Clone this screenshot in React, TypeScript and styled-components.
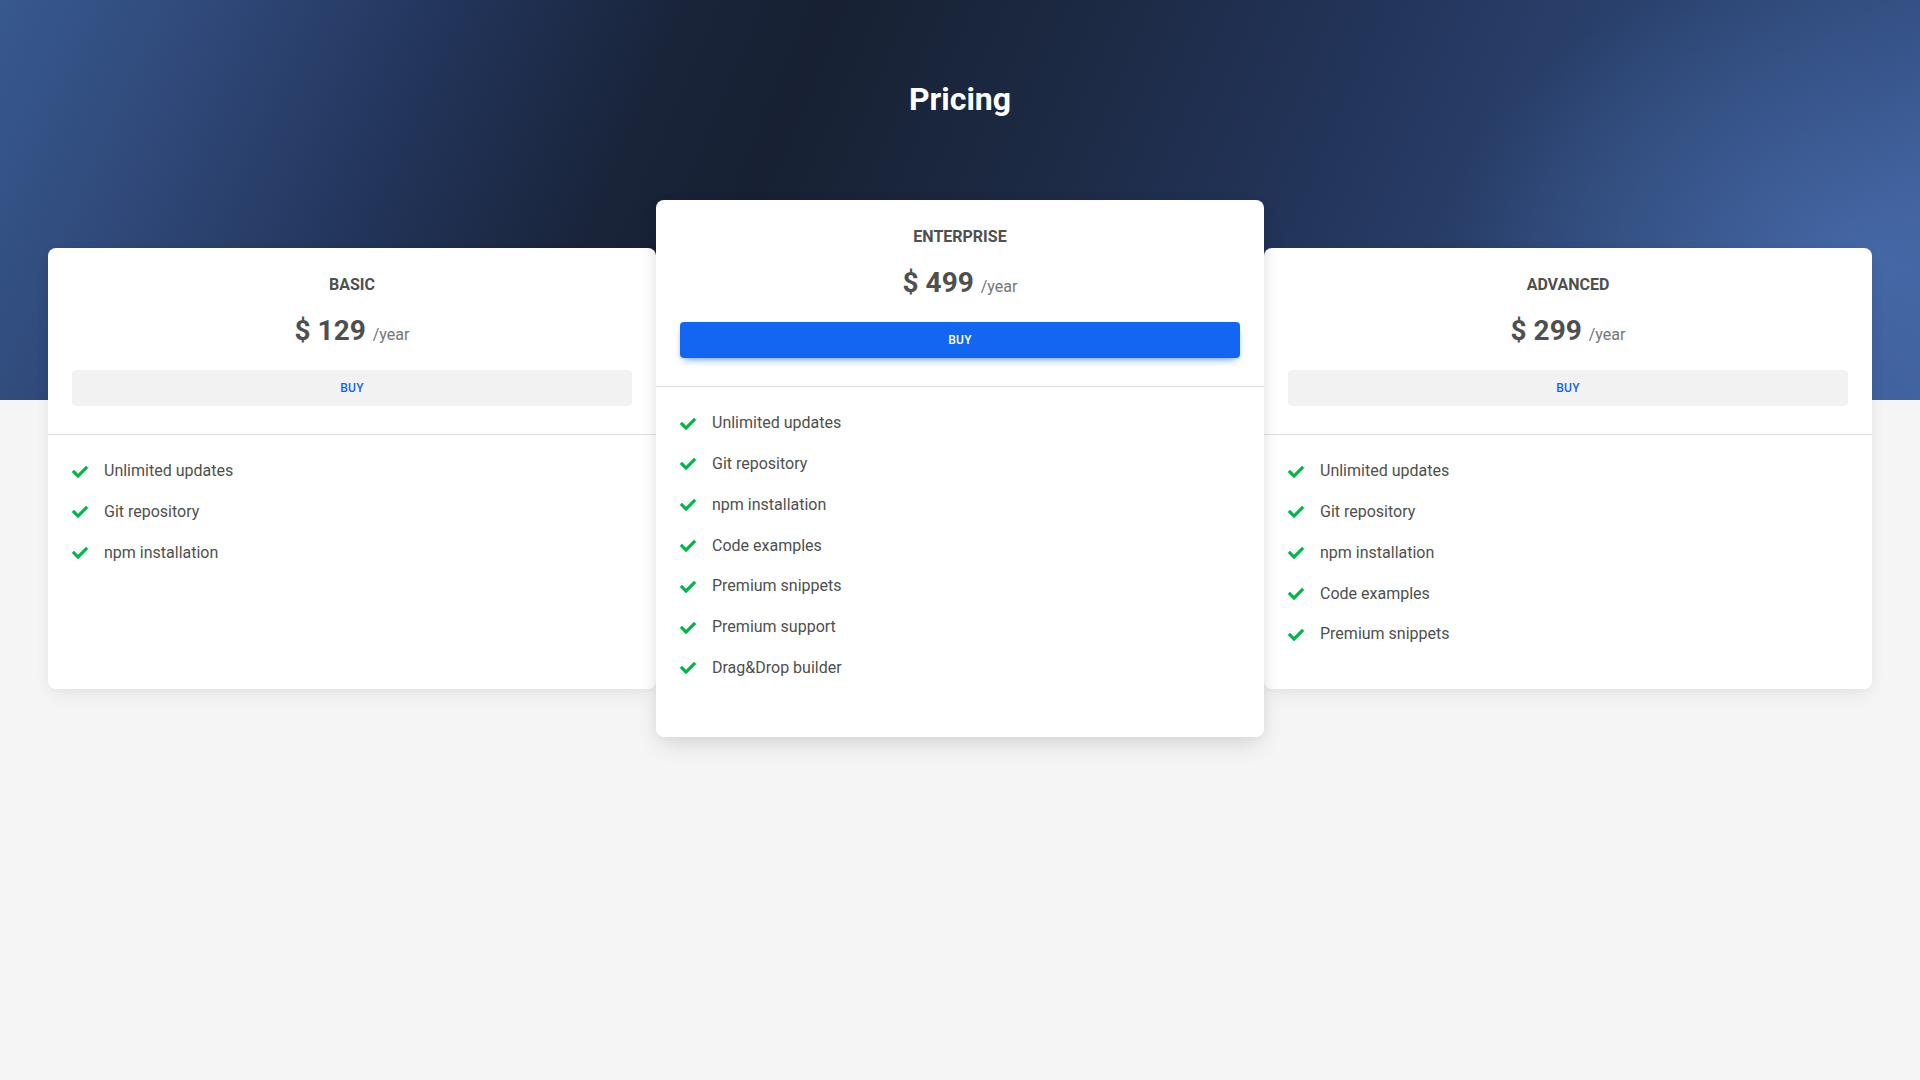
import * as React from 'react';
import { FaCheck } from 'react-icons/fa';
import { default as styled, createGlobalStyle } from 'styled-components';

interface Plan {
  name: string;
  price: number;
  features: string[];
  featured?: boolean;
}

const ALL_FEATURES = [
  'Unlimited updates',
  'Git repository',
  'npm installation',
  'Code examples',
  'Premium snippets',
  'Premium support',
  'Drag&Drop builder',
];

const plans: Plan[] = [
  { name: 'Basic', price: 129, features: ALL_FEATURES.slice(0, 3) },
  { name: 'Enterprise', price: 499, features: ALL_FEATURES, featured: true },
  { name: 'Advanced', price: 299, features: ALL_FEATURES.slice(0, 5) },
];

const GlobalStyle = createGlobalStyle`
  html, body {
    margin: 0;
    padding: 0;
  }
  body {
    background: #f5f5f5;
    font-family: Roboto, "Liberation Sans", Arial, sans-serif;
    color: #4f4f4f;
    min-height: 1080px;
  }
  * {
    box-sizing: border-box;
  }
`;

const Hero = styled.header`
  height: 400px;
  padding-top: 80px;
  text-align: center;
  background:
    radial-gradient(ellipse 420px 300px at 1860px 260px, rgba(82, 122, 192, 0.55), rgba(82, 122, 192, 0) 100%),
    linear-gradient(
      113deg,
      #37598e 0%,
      #30497a 10%,
      #22345a 22%,
      #19243a 33%,
      #172133 40%,
      #1c2942 52%,
      #23345a 66%,
      #2b4370 80%,
      #324d80 92%,
      #3a5a92 100%
    );
`;

const Title = styled.h1`
  margin: 0;
  font-size: 32px;
  line-height: 1.2;
  font-weight: 700;
  color: #ffffff;
`;

const CardsRow = styled.section`
  display: grid;
  grid-template-columns: repeat(3, 1fr);
  align-items: stretch;
  margin-top: -200px;
  padding: 0 48px;
`;

const Card = styled.div<{ $featured?: boolean }>`
  position: relative;
  z-index: ${p => (p.$featured ? 2 : 1)};
  margin: ${p => (p.$featured ? '0' : '48px 0')};
  background: #ffffff;
  border-radius: 8px;
  display: flex;
  flex-direction: column;
  box-shadow: ${p =>
    p.$featured
      ? '0 10px 24px -4px rgba(0, 0, 0, 0.12), 0 2px 15px -3px rgba(0, 0, 0, 0.07)'
      : '0 2px 15px -3px rgba(0, 0, 0, 0.07), 0 10px 20px -2px rgba(0, 0, 0, 0.04)'};
`;

const CardHeader = styled.div`
  padding: 24px 24px 28px;
  text-align: center;
  border-bottom: 1px solid #e0e0e0;
`;

const PlanName = styled.p`
  margin: 0 0 16px;
  font-size: 16px;
  line-height: 1.6;
  font-weight: 700;
  text-transform: uppercase;
  color: #4f4f4f;
`;

const Price = styled.h4`
  margin: 0 0 23px;
  font-size: 28px;
  line-height: 1.2;
  font-weight: 700;
  color: #4f4f4f;
`;

const Period = styled.small`
  font-size: 16px;
  font-weight: 400;
  color: #757575;
`;

const BuyButton = styled.button<{ $primary?: boolean }>`
  display: block;
  width: 100%;
  height: 36px;
  border: 0;
  border-radius: 4px;
  font-family: inherit;
  font-size: 12px;
  font-weight: 500;
  letter-spacing: 0.25px;
  text-transform: uppercase;
  cursor: pointer;
  background: ${p => (p.$primary ? '#1266f1' : '#f2f2f2')};
  color: ${p => (p.$primary ? '#ffffff' : '#1266f1')};
  box-shadow: ${p =>
    p.$primary
      ? '0 4px 9px -4px rgba(18, 102, 241, 0.9)'
      : 'none'};
`;

const CardBody = styled.div<{ $featured?: boolean }>`
  padding: 24px 24px ${p => (p.$featured ? '40px' : '24px')};
`;

const FeatureList = styled.ul`
  list-style: none;
  margin: 0 0 16px;
  padding: 0;
  display: flex;
  flex-direction: column;
  gap: 16px;
`;

const Feature = styled.li`
  display: flex;
  align-items: center;
  gap: 16px;
  font-size: 16px;
  line-height: 24.8px;
  color: #4f4f4f;

  svg {
    flex: none;
    color: #00b74a;
  }
`;

const PricingCard: React.FunctionComponent<{ plan: Plan }> = ({ plan }) => (
  <Card $featured={plan.featured}>
    <CardHeader>
      <PlanName>{plan.name}</PlanName>
      <Price>
        $ {plan.price} <Period>/year</Period>
      </Price>
      <BuyButton $primary={plan.featured}>Buy</BuyButton>
    </CardHeader>
    <CardBody $featured={plan.featured}>
      <FeatureList>
        {plan.features.map(f => (
          <Feature key={f}>
            <FaCheck size={16} />
            {f}
          </Feature>
        ))}
      </FeatureList>
    </CardBody>
  </Card>
);

const App: React.FunctionComponent = () => (
  <>
    <GlobalStyle />
    <Hero>
      <Title>Pricing</Title>
    </Hero>
    <CardsRow>
      {plans.map(p => (
        <PricingCard key={p.name} plan={p} />
      ))}
    </CardsRow>
  </>
);

export default App;
